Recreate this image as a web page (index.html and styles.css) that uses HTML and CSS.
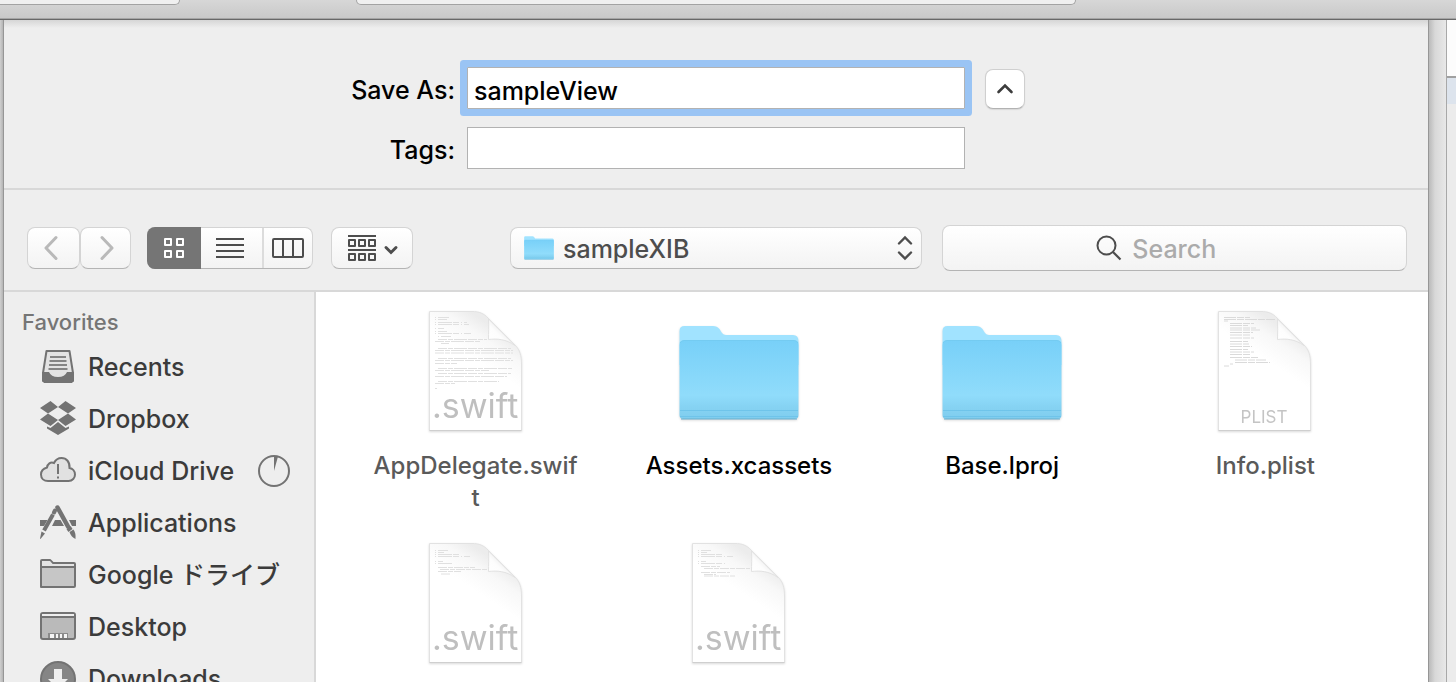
FILE: index.html
```html
<!DOCTYPE html>
<html lang="en">
<head>
<meta charset="utf-8">
<title>Save As</title>
<link rel="stylesheet" href="styles.css">
</head>
<body>
<svg class="defs" aria-hidden="true">
  <defs>
    <linearGradient id="folder-front" x1="0" y1="0" x2="0" y2="1">
      <stop offset="0" stop-color="#78d0f8"/><stop offset=".7" stop-color="#90dcfb"/><stop offset=".84" stop-color="#86d3f3"/><stop offset="1" stop-color="#7fcdee"/>
    </linearGradient>
    <linearGradient id="page-shade" gradientUnits="userSpaceOnUse" x1="70" y1="20" x2="50" y2="50">
      <stop offset="0" stop-color="#ececec"/><stop offset=".4" stop-color="#f8f8f8"/><stop offset="1" stop-color="#fff"/>
    </linearGradient>
    <linearGradient id="fold-shade" gradientUnits="userSpaceOnUse" x1="60" y1="29" x2="72" y2="17">
      <stop offset="0" stop-color="#fff"/><stop offset=".6" stop-color="#fdfdfd"/><stop offset="1" stop-color="#f0f0f0"/>
    </linearGradient>
    <symbol id="folder" viewBox="0 0 120 96">
      <path d="M.5 9V6Q.5 1 5.500 1H34Q38 1 40.500 4L43 8Q44.500 10 47 10H114Q119.500 10 119.500 16V40H.5Z" fill="#a1e3ff"/>
      <path d="M.5 20Q.5 15.500 5 15.500H115Q119.500 15.500 119.500 20V90Q119.500 94 115.500 94H4.500Q.5 94 .5 90Z" fill="url(#folder-front)"/>
      <path d="M1 18Q2 15.500 5 15.500H115Q118 15.500 119 18" fill="none" stroke="#74cbf1" stroke-width="1"/>
      <path d="M1 85.500H119M1 91.500H119" stroke="#6fc4ea" stroke-width="1"/>
      <path d="M2 94H118" stroke="#6aaecd" stroke-width="1"/>
    </symbol>
    <symbol id="page" viewBox="0 0 94 122">
      <path d="M.5.5H43C50 .5 55 2.500 59 7L86 34C91 39 92.500 45 92.500 53V119.500H.5Z" fill="url(#page-shade)" stroke="#e2e2e2"/>
      <path d="M.5 119.500H92.500" stroke="#cfcfcf"/>
      <path d="M59.500 8C60 15 59.500 22 59.500 28.500C68 27.500 77 28 86 34.500Z" fill="url(#fold-shade)" stroke="#e2e2e2"/>
    </symbol>
  </defs>
</svg>
<div class="titlebar"><span class="pill pill-left"></span><span class="pill pill-center"></span></div>
<div class="stage">
  <div class="edge-left"></div>
  <main class="sheet">
    <form class="fields">
      <label for="save-as">Save As:</label>
      <input id="save-as" class="field field-focused" type="text" value="sampleView">
      <button class="collapse" type="button" aria-label="Collapse">
        <svg width="18" height="12" viewBox="0 0 18 12"><path d="M2.500 9L9 2.500L15.500 9" fill="none" stroke="#3c3c3c" stroke-width="2.600" stroke-linecap="round"/></svg>
      </button>
      <label for="tags">Tags:</label>
      <input id="tags" class="field" type="text">
    </form>
    <div class="toolbar">
      <div class="nav">
        <button class="control back" type="button" aria-label="Back"><svg width="16" height="26" viewBox="0 0 16 26"><path d="M13 2.500L3 13L13 23.500" fill="none" stroke="#b9b9b9" stroke-width="3" stroke-linecap="round" stroke-linejoin="round"/></svg></button>
        <button class="control forward" type="button" aria-label="Forward"><svg width="16" height="26" viewBox="0 0 16 26"><path d="M3 2.500L13 13L3 23.500" fill="none" stroke="#b9b9b9" stroke-width="3" stroke-linecap="round" stroke-linejoin="round"/></svg></button>
      </div>
      <div class="views">
        <button class="view view-on" type="button" aria-label="Icon view"><svg width="20" height="20" viewBox="0 0 20 20"><path d="M1 1H7V7H1ZM13 1H19V7H13ZM1 13H7V19H1ZM13 13H19V19H13Z" fill="none" stroke="#fff" stroke-width="2" stroke-linejoin="round"/></svg></button>
        <button class="view view-list" type="button" aria-label="List view"><svg width="28" height="20" viewBox="0 0 28 20"><path d="M0 1H28M0 7H28M0 13H28M0 19H28" stroke="#4d4d4d" stroke-width="2"/></svg></button>
        <button class="view view-columns" type="button" aria-label="Column view"><svg width="32" height="20" viewBox="0 0 32 20"><path d="M2 1H30Q31 1 31 2V18Q31 19 30 19H2Q1 19 1 18V2Q1 1 2 1ZM11 1V19M21 1V19" fill="none" stroke="#4d4d4d" stroke-width="2"/></svg></button>
      </div>
      <button class="control arrange" type="button" aria-label="Group items">
        <svg width="52" height="28" viewBox="0 0 52 28"><path d="M0 2H28M0 16H28" stroke="#4d4d4d" stroke-width="2"/><path d="M1 6H7V12H1ZM11 6H17V12H11ZM21 6H27V12H21ZM1 20H7V26H1ZM11 20H17V26H11ZM21 20H27V26H21Z" fill="none" stroke="#4d4d4d" stroke-width="2" stroke-linejoin="round"/><path d="M38 13.500L43 18.500L48 13.500" fill="none" stroke="#4d4d4d" stroke-width="3" stroke-linecap="round"/></svg>
      </button>
      <div class="location">
        <svg class="location-folder" width="30" height="24" viewBox="0 0 120 96"><use href="#folder"/></svg>
        <select class="control" aria-label="Location"><option>sampleXIB</option></select>
        <svg class="location-arrows" width="16" height="26" viewBox="0 0 16 26"><path d="M2 8.500L8 2.500L14 8.500M2 17.500L8 23.500L14 17.500" fill="none" stroke="#4d4d4d" stroke-width="2.400" stroke-linecap="round"/></svg>
      </div>
      <label class="control search">
        <svg width="26" height="26" viewBox="0 0 26 26"><circle cx="10.500" cy="10.500" r="9" fill="none" stroke="#4d4d4d" stroke-width="2"/><path d="M17 17L24.500 24.500" stroke="#4d4d4d" stroke-width="2.200"/></svg>
        <input type="search" placeholder="Search" aria-label="Search">
      </label>
    </div>
    <div class="browser">
      <nav class="sidebar">
        <h2>Favorites</h2>
        <a href="#recents"><svg width="36" height="36" viewBox="0 0 36 36"><path d="M6.500 2H29.500L33 24V32L31.500 33H4.500L3 32V24Z" fill="#e3e3e3" stroke="#737373" stroke-width="2" stroke-linejoin="round"/><path d="M2 23H9Q11 28 18 28Q25 28 27 23H34V29L32.500 33H3.500L2 29Z" fill="#737373"/><path d="M10 8H26M9.500 12H26.500M9 16H27M8.500 20H27.500" stroke="#858585" stroke-width="2"/></svg>Recents</a>
        <a href="#dropbox"><svg width="36" height="36" viewBox="0 0 36 36"><path d="M10.500 0L18 6L8 12.500L0 7ZM25.500 0L36 7L28 12.500L18 6ZM8 12.500L18 19L10.500 25L0 18.500ZM28 12.500L36 18.500L25.500 25L18 19ZM18 21L25.500 27L29 25.500V27.500L18 34L7 27.500V25.500L10.500 27Z" fill="#737373"/></svg>Dropbox</a>
        <a href="#icloud"><svg width="36" height="36" viewBox="0 0 36 36"><path d="M8 28H28.500C32.500 28 35 25 35 21.500C35 18 32.500 15.500 29.500 15C30 9 26.500 5 21.500 5C18 5 15.500 7 14 10C10.500 8.500 7.500 11 7 14.500C3.500 15.500 1 18 1 21.500C1 25.500 4 28 8 28Z" fill="#e1e1e1" stroke="#737373" stroke-width="2"/><path d="M18 11V21M18 23.500V25.500" stroke="#737373" stroke-width="2"/></svg>iCloud Drive<svg class="progress" width="32" height="32" viewBox="0 0 32 32"><circle cx="16" cy="16" r="15" fill="none" stroke="#737373" stroke-width="2"/><path d="M16 16V1Q18 1 20 1.500Z" fill="#737373"/></svg></a>
        <a href="#applications"><svg width="36" height="36" viewBox="0 0 36 36"><path d="M0 15H7.500L4 21H0ZM15 15H20.500L24 21H12ZM29 15H36V21H32Z" fill="#737373"/><path d="M17.500 2.500L28 21.500" stroke="#737373" stroke-width="4.500" stroke-linecap="round"/><path d="M28.500 22.500L30.500 25.500" stroke="#737373" stroke-width="5"/><path d="M29.500 27L33.500 24.500Q36 28 35.500 34Q31 32 29.500 27Z" fill="#737373"/><path d="M13 9.500L4 25.500" stroke="#737373" stroke-width="4"/><path d="M14 7.500L15 5.500" stroke="#737373" stroke-width="4" stroke-linecap="round"/><path d="M1.500 26.500L5 28.500L.5 34L0 33.500Z" fill="#737373"/></svg>Applications</a>
        <a href="#google-drive"><svg width="36" height="36" viewBox="0 0 36 36"><path d="M1 30V4Q1 3 2 3H10L13 6H34Q35 6 35 7V29Q35 30 34 30Z" fill="#c6c6c6" stroke="#737373" stroke-width="2" stroke-linejoin="round"/><path d="M2 4H10L12.500 7H34V9H2Z" fill="#e4e4e4"/><path d="M1 10H35" stroke="#737373" stroke-width="2"/></svg>Google ドライブ</a>
        <a href="#desktop"><svg width="36" height="36" viewBox="0 0 36 36"><rect x="1" y="4" width="34" height="26" rx="2" fill="#bababa" stroke="#737373" stroke-width="2"/><path d="M2 6H34" stroke="#eee" stroke-width="2"/><path d="M2 8H34" stroke="#737373" stroke-width="2"/><path d="M8 24H28V29H8Z" fill="#8a8a8a"/><path d="M10 25H14V29H10ZM16 25H18V29H16ZM20 25H22V29H20ZM24 25H27V29H24Z" fill="#f4f4f4"/></svg>Desktop</a>
        <a href="#downloads"><svg width="36" height="36" viewBox="0 0 36 36"><circle cx="18" cy="18" r="17" fill="#858585" stroke="#737373" stroke-width="2"/><path d="M14 8H22V18H28L18 28L8 18H14Z" fill="#eee"/></svg>Downloads</a>
      </nav>
      <section class="files" aria-label="Files">
        <figure class="file dim">
          <svg width="94" height="122" viewBox="0 0 94 122"><use href="#page"/><g stroke="#e0e0e0" fill="none"><path stroke-dasharray="1 2 14 1 6 2" d="M6 6.500H20M6 8.500H18M6 11.500H38M6 13.500H40M6 17.500H15M6 20.500H18M6 22.500H42M9 25.500H22"/><path stroke-dasharray="9 1 5 1 13 1" d="M9 28.500H58M6 30.500H52M12 32.500H20M9 37.500H82M6 39.500H84M6 42H84M9 47.500H82M6 49.500H84M6 52.500H28M9 57.500H83M6 59.500H60M9 62.500H82M6 65.500H78M9 70.500H70M6 72.500H26M6 77.500H8"/></g><text x="3" y="107" class="ext">.swift</text></svg>
          <figcaption>AppDelegate.swift</figcaption>
        </figure>
        <figure class="file">
          <svg class="folder-icon" width="120" height="96" viewBox="0 0 120 96"><use href="#folder"/></svg>
          <figcaption>Assets.xcassets</figcaption>
        </figure>
        <figure class="file">
          <svg class="folder-icon" width="120" height="96" viewBox="0 0 120 96"><use href="#folder"/></svg>
          <figcaption>Base.lproj</figcaption>
        </figure>
        <figure class="file dim">
          <svg width="94" height="122" viewBox="0 0 94 122"><use href="#page"/><g stroke="#dadada" fill="none"><path stroke-dasharray="12 1 7 1" d="M6 6.500H32M6 8.500H57M6 10H10M12 12.500H36M12 14.500H30M12 17H38M12 19H42M12 21.500H35M12 24H33M12 27H36M12 30.500H30M12 33H31M12 35.500H34M12 38.500H30M12 41H36M12 43.500H32M12 46.500H40M17 49H48M17 51.500H52M12 53H15M6 55H11"/></g><text x="46" y="112" class="kind">PLIST</text></svg>
          <figcaption>Info.plist</figcaption>
        </figure>
        <figure class="file dim">
          <svg width="94" height="122" viewBox="0 0 94 122"><use href="#page"/><g stroke="#e0e0e0" fill="none"><path stroke-dasharray="1 2 14 1 6 2" d="M6 7.500H19M6 9.500H15M6 11.500H30M6 13.500H41M6 18.500H14M6 20.500H24"/><path stroke-dasharray="9 1 5 1" d="M9 24.500H46M11 26.500H58M9 28.500H32M12 31H22"/></g><text x="3" y="107" class="ext">.swift</text></svg>
        </figure>
        <figure class="file dim">
          <svg width="94" height="122" viewBox="0 0 94 122"><use href="#page"/><g stroke="#e0e0e0" fill="none"><path stroke-dasharray="1 2 14 1 6 2" d="M6 7.500H19M6 9.500H15M6 11.500H30M6 13.500H41M6 18.500H14M6 20.500H33"/><path stroke-dasharray="9 1 5 1" d="M9 23.500H28M12 25.500H58M9 29.500H38M12 31.500H24M12 33H44"/></g><text x="3" y="107" class="ext">.swift</text></svg>
        </figure>
      </section>
    </div>
  </main>
  <div class="edge-right"></div>
  <div class="behind"></div>
</div>
</body>
</html>
```
FILE: styles.css
```css
* { box-sizing: border-box; }
body {
  margin: 0;
  height: 100vh;
  display: flex;
  flex-direction: column;
  overflow: hidden;
  background: #eee;
  color: #000;
  font: 450 24px/32px Inter, "Noto Sans CJK JP", sans-serif;
}
button, input, select { margin: 0; font: inherit; color: inherit; }
svg { display: block; flex: none; }
.defs { position: absolute; width: 0; height: 0; }

.titlebar {
  flex: none;
  display: grid;
  grid-template-columns: 180fr 176fr 720fr 380fr;
  height: 20px;
  background: linear-gradient(#d7d7d7, #c8c8c8);
  border-bottom: 1px solid #686868;
  box-shadow: inset 0 -1px #a5a5a5;
}
.pill { height: 5px; background: #f0f0f0; border: 1px solid #a3a3a3; border-top: 0; }
.pill-left { border-left: 0; border-radius: 0 0 7px 0; }
.pill-center { grid-column: 3; border-radius: 0 0 7px 7px; }

.stage { flex: 1; min-height: 0; display: flex; }
.edge-left { width: 3px; background: linear-gradient(90deg, #cfcfcf, #b4b4b4); }
.sheet {
  flex: 1;
  min-width: 0;
  display: flex;
  flex-direction: column;
  background: linear-gradient(#d6d6d6, #eee 8px);
  border: solid #969696;
  border-width: 0 1px;
}
.edge-right { width: 17px; background: linear-gradient(90deg, #bababa, #d8d8d8 6px, #e8e8e8); }
.behind {
  width: 10px;
  border-left: 1px solid #a8a8a8;
  background: linear-gradient(#fcfcfc 56px, #a0a0a0 56px 58px, #dde4ed 58px 84px, #ececec 84px);
}

.fields {
  flex: none;
  display: grid;
  grid-template-columns: minmax(0, 1fr) 498px minmax(0, 1fr);
  grid-auto-rows: 42px;
  gap: 18px 12px;
  align-items: center;
  padding: 47px 0 19px;
  border-bottom: 2px solid #d8d8d8;
  font-size: 25px;
}
.fields label { text-align: right; padding-top: 4px; }
.field {
  width: 100%;
  height: 42px;
  padding: 5px 6px 0;
  border: 1px solid #b2b2b2;
  border-radius: 0;
  background: #fff;
  outline: none;
}
.field-focused { box-shadow: 0 0 0 7px #9ac4f4; border-radius: 1px; }
.collapse {
  width: 40px;
  height: 40px;
  margin: 2px 0 0 8px;
  padding: 0;
  display: grid;
  place-items: center;
  background: #fff;
  border: 1px solid #cfcfcf;
  border-bottom-color: #b2b2b2;
  border-radius: 8px;
  box-shadow: 0 1px 1px #d8d8d8;
}

.toolbar {
  flex: none;
  display: flex;
  align-items: center;
  height: 102px;
  padding: 16px 21px 0 23px;
  border-bottom: 2px solid #d8d8d8;
  color: #4d4d4d;
}
.control, .views {
  height: 42px;
  padding: 0;
  border: 1px solid #d4d4d4;
  border-bottom-color: #b4b4b4;
  border-radius: 8px;
  background: linear-gradient(#fff, #f3f3f3);
}
.nav { display: flex; margin-right: 16px; }
.nav .control { display: grid; place-items: center; }
.back { width: 53px; padding-right: 6px; }
.forward { width: 51px; padding-left: 2px; }
.views { display: flex; width: 166px; margin-right: 18px; }
.view { display: grid; place-items: center; padding: 0; border: 0; background: none; }
.view-on { width: 54px; margin: -1px 0 -1px -1px; background: #757575; border-radius: 8px 0 0 8px; }
.view-list { width: 63px; padding-right: 3px; border-right: 2px solid #dcdcdc; }
.view-columns { flex: 1; }
.arrange { width: 82px; padding-left: 4px; display: grid; place-items: center; margin-right: 97px; }
.location { flex: 413 1 0; position: relative; margin-right: 20px; }
.location select { display: block; width: 100%; padding: 2px 52px 0; font-size: 25px; appearance: none; }
.location-folder { position: absolute; left: 14px; top: 9px; }
.location-arrows { position: absolute; right: 9px; top: 8px; }
.search {
  flex: 465 1 0;
  height: 46px;
  display: flex;
  align-items: center;
  justify-content: center;
  gap: 10px;
  font-size: 25px;
}
.search input { width: 120px; padding: 2px 0 0; border: 0; background: none; outline: none; }
.search input::placeholder { color: #ababab; opacity: 1; }

.browser { flex: 1; min-height: 0; display: flex; overflow: hidden; }
.sidebar {
  flex: none;
  width: 312px;
  padding: 14px 0 0 18px;
  background: #eee;
  border-right: 2px solid #d8d8d8;
}
.sidebar h2 { margin: 0 0 3px; font-size: 22px; line-height: 32px; font-weight: 550; color: #757575; }
.sidebar a {
  display: flex;
  align-items: center;
  gap: 12px;
  height: 52px;
  padding-left: 18px;
  font-size: 25px;
  font-weight: 500;
  color: #3b3b3b;
  text-decoration: none;
  white-space: nowrap;
}
.progress { margin: 0 24px 0 auto; }

.files {
  flex: 1;
  min-width: 0;
  display: grid;
  grid-template-columns: repeat(4, 1fr);
  grid-auto-rows: 203px;
  align-content: start;
  row-gap: 29px;
  padding: 19px 31px 0 28px;
  background: #fff;
}
.file { margin: 0; display: flex; flex-direction: column; align-items: center; }
.file svg { filter: drop-shadow(0 1px 1px #00000026); }
.file .folder-icon { margin: 14px 0 12px; }
.file figcaption { width: 206px; margin-top: 17px; text-align: center; overflow-wrap: anywhere; }
.dim { color: #5a5a5a; }
.ext { font-size: 34px; font-weight: 400; fill: #bfbfbf; }
.kind { font-size: 17px; font-weight: 400; fill: #c4c4c4; text-anchor: middle; }
```
